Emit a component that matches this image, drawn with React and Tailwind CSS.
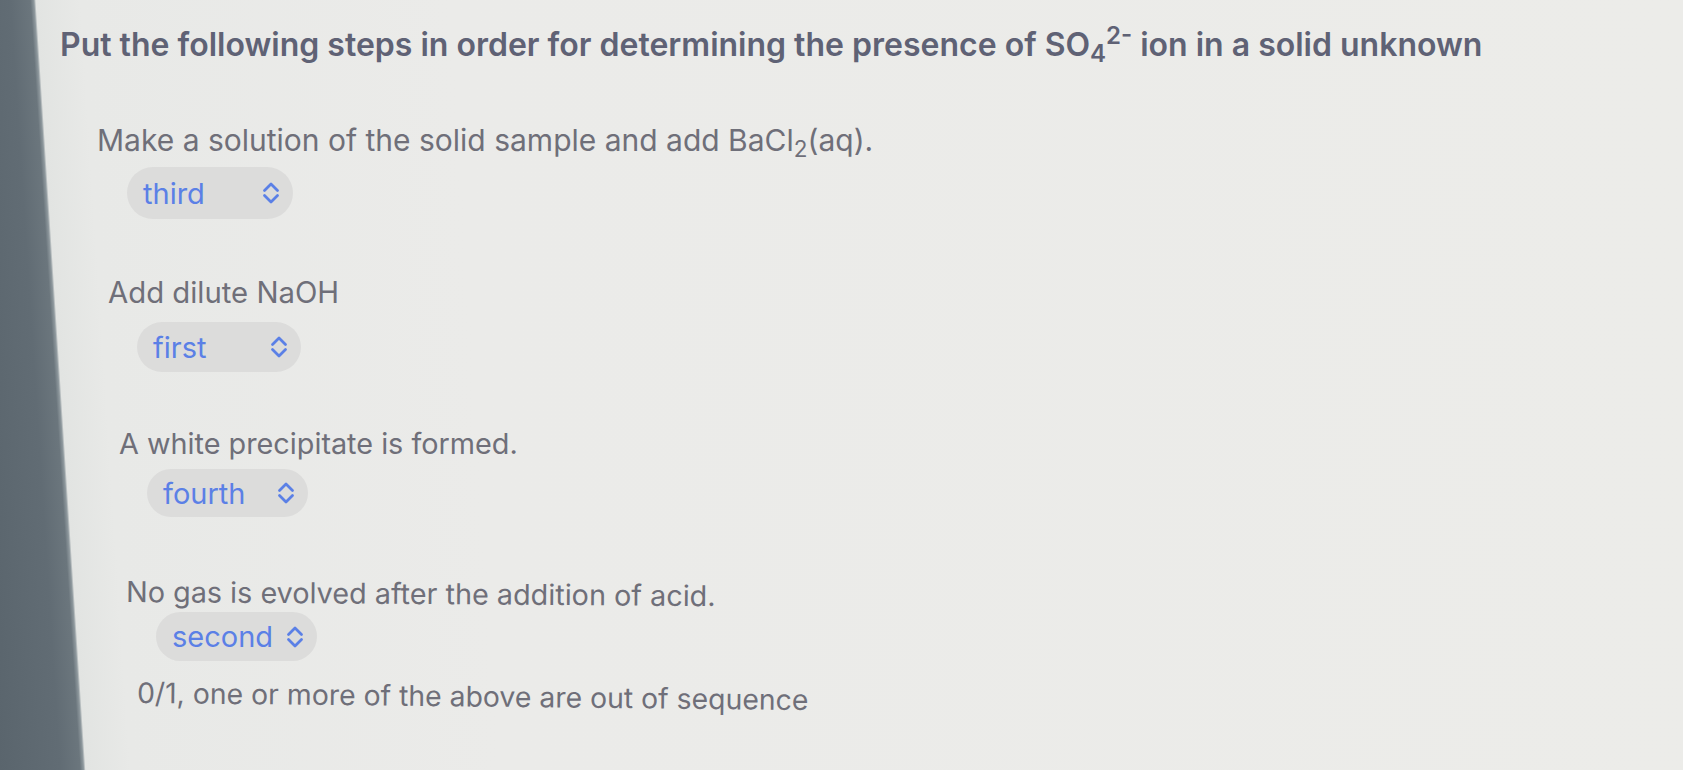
import React from "react";

function Chevrons() {
  return (
    <svg width="18" height="26" viewBox="0 0 18 26" fill="none" aria-hidden="true">
      <path d="M2.5 10.5 L9 4 L15.5 10.5" stroke="#5b80e6" strokeWidth="2.8" strokeLinecap="round" strokeLinejoin="round" />
      <path d="M2.5 15.5 L9 22 L15.5 15.5" stroke="#5b80e6" strokeWidth="2.8" strokeLinecap="round" strokeLinejoin="round" />
    </svg>
  );
}

function Pill({ value, className }) {
  return (
    <div
      className={
        "flex items-center justify-between rounded-full bg-[#dcdcdb] pl-[16px] pr-[13px] text-[29px] text-[#5b80e6] " +
        className
      }
    >
      <span className="leading-none">{value}</span>
      <Chevrons />
    </div>
  );
}

export default function App() {
  return (
    <div className="h-[770px] w-full overflow-hidden bg-[linear-gradient(86.3deg,#5a656d_0px,#616c74_60px,#6b767d_80px,#8f999e_83.5px,#e2e4e2_85.5px,#e8e9e7_130px,#ebebe9_500px,#ecece9_100%)] font-['Inter',sans-serif]">
      <div className="pl-[60px] pt-[26px]">
        <h1 className="text-[32px] font-semibold leading-[38px] text-[#5f6275]">
          Put the following steps in order for determining the presence of SO
          <sub>4</sub>
          <sup>2-</sup> ion in a solid unknown
        </h1>
      </div>

      <div className="flex flex-col items-start leading-[36px] text-[#6f6f79]">
        <p className="ml-[97px] mt-[58px] text-[30px]">
          Make a solution of the solid sample and add BaCl<sub>2</sub>(aq).
        </p>
        <Pill value="third" className="ml-[127px] mt-[9px] h-[52px] w-[166px]" />

        <p className="ml-[108px] mt-[56px] text-[29.3px]">Add dilute NaOH</p>
        <Pill value="first" className="ml-[137px] mt-[11px] h-[50px] w-[164px]" />

        <p className="ml-[119px] mt-[54px] text-[28.8px]">A white precipitate is formed.</p>
        <Pill value="fourth" className="ml-[147px] mt-[7px] h-[48px] w-[161px]" />

        <p className="ml-[126px] mt-[57px] origin-left rotate-[0.4deg] text-[28.8px]">
          No gas is evolved after the addition of acid.
        </p>
        <Pill value="second" className="ml-[156px] mt-[2px] h-[49px] w-[161px]" />

        <p className="ml-[137px] mt-[14px] origin-left rotate-[0.6deg] text-[28.4px]">
          0/1, one or more of the above are out of sequence
        </p>
      </div>
    </div>
  );
}
